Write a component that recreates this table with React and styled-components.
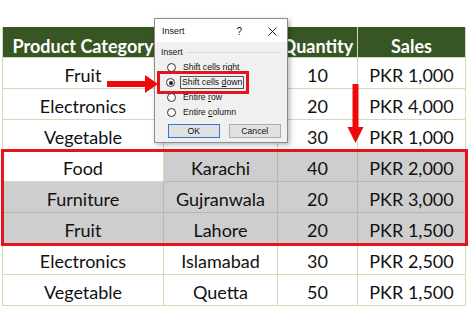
import React from 'react';
import styled, { createGlobalStyle } from 'styled-components';

const GlobalStyle = createGlobalStyle`
  html, body {
    margin: 0;
    padding: 0;
    background: #fff;
  }
`;

const Sheet = styled.div`
  position: relative;
  width: 474px;
  height: 322px;
  box-sizing: border-box;
  padding: 27px 0 0 2px;
  background: #fff;
  overflow: hidden;
`;

const Table = styled.div`
  width: 464px;
  border-left: 1px solid #c6e0b4;
  box-sizing: border-box;
`;

const Row = styled.div`
  display: grid;
  grid-template-columns: 161px 114px 80px 108px;
  height: 31px;
`;

const Cell = styled.div`
  display: flex;
  align-items: flex-end;
  justify-content: center;
  box-sizing: border-box;
  padding-bottom: 3px;
  border-right: 1px solid ${(p) => (p.$shade ? '#b3b9ad' : '#c6e0b4')};
  border-bottom: 1px solid ${(p) => (p.$shade ? '#b3b9ad' : '#c6e0b4')};
  background: ${(p) => (p.$shade ? '#cecece' : '#fff')};
  color: #111;
  font-family: Lato, 'Open Sans', sans-serif;
  font-size: 18px;
  line-height: 20px;
  white-space: nowrap;
`;

const HeadCell = styled(Cell)`
  padding-bottom: 1px;
  background: #375623;
  color: #fff;
  font-weight: 700;
  border-right-color: #c9d9bb;
  border-bottom-color: #c6e0b4;
`;

const Selection = styled.div`
  position: relative;
  z-index: 1;
  outline: 3px solid #e3141c;
  outline-offset: -1px;
`;

const Dialog = styled.div`
  position: absolute;
  left: 154px;
  top: 18px;
  z-index: 2;
  width: 134px;
  height: 125px;
  box-sizing: border-box;
  border: 1px solid #8c8c8c;
  background: #f0f0f0;
  box-shadow: 2px 2px 5px rgba(0, 0, 0, 0.28);
  font-family: 'Liberation Sans', Arial, sans-serif;
  font-size: 8.7px;
  color: #111;
  display: flex;
  flex-direction: column;
`;

const TitleBar = styled.div`
  height: 22px;
  background: #fff;
  display: flex;
  align-items: center;
  padding: 1px 10px 0 7px;
  font-size: 9px;
`;

const TitleText = styled.span`
  flex: 1;
`;

const HelpMark = styled.span`
  margin-right: 26px;
  font-size: 10px;
`;

const DialogBody = styled.div`
  flex: 1;
  display: flex;
  flex-direction: column;
  padding: 5px 6px 0 6px;
`;

const GroupLabel = styled.div`
  display: flex;
  align-items: center;
  gap: 4px;
  height: 10px;
  margin-bottom: 3px;

  &::after {
    content: '';
    flex: 1;
    height: 1px;
    background: #dcdcdc;
  }
`;

const Options = styled.div`
  display: flex;
  flex-direction: column;
`;

const Option = styled.label`
  display: flex;
  align-items: center;
  height: 15px;
  padding-left: 6px;
  gap: 5px;
`;

const Radio = styled.span`
  width: 9px;
  height: 9px;
  box-sizing: border-box;
  border: 1px solid #333;
  border-radius: 50%;
  background: #fff;
  display: flex;
  align-items: center;
  justify-content: center;

  &::after {
    content: '';
    width: 4px;
    height: 4px;
    border-radius: 50%;
    background: ${(p) => (p.$checked ? '#222' : 'transparent')};
  }
`;

const OptionText = styled.span`
  padding: 1px 1px;
  border: 1px solid ${(p) => (p.$focus ? '#555' : 'transparent')};
  line-height: 9px;
`;

const Highlight = styled.div`
  margin: -1px 35px -1px -1px;
  outline: 3px solid #e3141c;
  outline-offset: 0;
  height: 17px;
  display: flex;
  align-items: center;
`;

const Buttons = styled.div`
  display: flex;
  gap: 9px;
  padding-left: 7px;
  margin-top: 4px;
`;

const Button = styled.div`
  width: ${(p) => p.$w}px;
  height: 14px;
  box-sizing: border-box;
  border: 1px solid ${(p) => (p.$default ? '#2f7ad1' : '#adadad')};
  background: #e1e1e1;
  display: flex;
  align-items: center;
  justify-content: center;
`;

const Arrow = styled.svg`
  position: absolute;
  z-index: 3;
  left: ${(p) => p.$x}px;
  top: ${(p) => p.$y}px;
`;

// city cells of the first rows sit under the dialog, so they stay empty
const rows = [
  ['Fruit', '', '10', 'PKR 1,000'],
  ['Electronics', '', '20', 'PKR 4,000'],
  ['Vegetable', '', '30', 'PKR 1,000'],
];

const selected = [
  ['Food', 'Karachi', '40', 'PKR 2,000'],
  ['Furniture', 'Gujranwala', '20', 'PKR 3,000'],
  ['Fruit', 'Lahore', '20', 'PKR 1,500'],
];

const after = [
  ['Electronics', 'Islamabad', '30', 'PKR 2,500'],
  ['Vegetable', 'Quetta', '50', 'PKR 1,500'],
];

function DataRow({ cells, shade }) {
  return (
    <Row>
      {cells.map((c, i) => (
        // active cell keeps white background inside the selection
        <Cell key={i} $shade={shade && !(shade === 'first' && i === 0)}>
          {c}
        </Cell>
      ))}
    </Row>
  );
}

function InsertDialog() {
  return (
    <Dialog>
      <TitleBar>
        <TitleText>Insert</TitleText>
        <HelpMark>?</HelpMark>
        <svg width="9" height="9" viewBox="0 0 9 9">
          <path d="M0.5 0.5 L8.5 8.5 M8.5 0.5 L0.5 8.5" stroke="#222" strokeWidth="1" />
        </svg>
      </TitleBar>
      <DialogBody>
        <GroupLabel>Insert</GroupLabel>
        <Options>
          <Option>
            <Radio />
            <OptionText>Shift cells <u>r</u>ight</OptionText>
          </Option>
          <Highlight>
            <Option>
              <Radio $checked />
              <OptionText $focus>Shift cells <u>d</u>own</OptionText>
            </Option>
          </Highlight>
          <Option>
            <Radio />
            <OptionText>Entire <u>r</u>ow</OptionText>
          </Option>
          <Option>
            <Radio />
            <OptionText>Entire <u>c</u>olumn</OptionText>
          </Option>
        </Options>
        <Buttons>
          <Button $w={53} $default>OK</Button>
          <Button $w={54}>Cancel</Button>
        </Buttons>
      </DialogBody>
    </Dialog>
  );
}

export default function App() {
  return (
    <>
      <GlobalStyle />
      <Sheet>
        <Table>
          <Row>
            <HeadCell>Product Category</HeadCell>
            <HeadCell />
            <HeadCell>Quantity</HeadCell>
            <HeadCell>Sales</HeadCell>
          </Row>
          {rows.map((r, i) => (
            <DataRow key={i} cells={r} />
          ))}
          <Selection>
            {selected.map((r, i) => (
              <DataRow key={i} cells={r} shade={i === 0 ? 'first' : true} />
            ))}
          </Selection>
          {after.map((r, i) => (
            <DataRow key={i} cells={r} />
          ))}
        </Table>
        <InsertDialog />
        <Arrow $x={105} $y={73} width="56" height="22" viewBox="0 0 56 22">
          <path d="M2 8 H40 V2 L53 11 L40 20 V14 H2 Z" fill="#ee0a0a" />
        </Arrow>
        <Arrow $x={346} $y={82} width="20" height="64" viewBox="0 0 20 64">
          <path d="M6.5 2 H12.5 V45 H17.5 L9.5 61 L1.5 45 H6.5 Z" fill="#ee0a0a" />
        </Arrow>
      </Sheet>
    </>
  );
}
